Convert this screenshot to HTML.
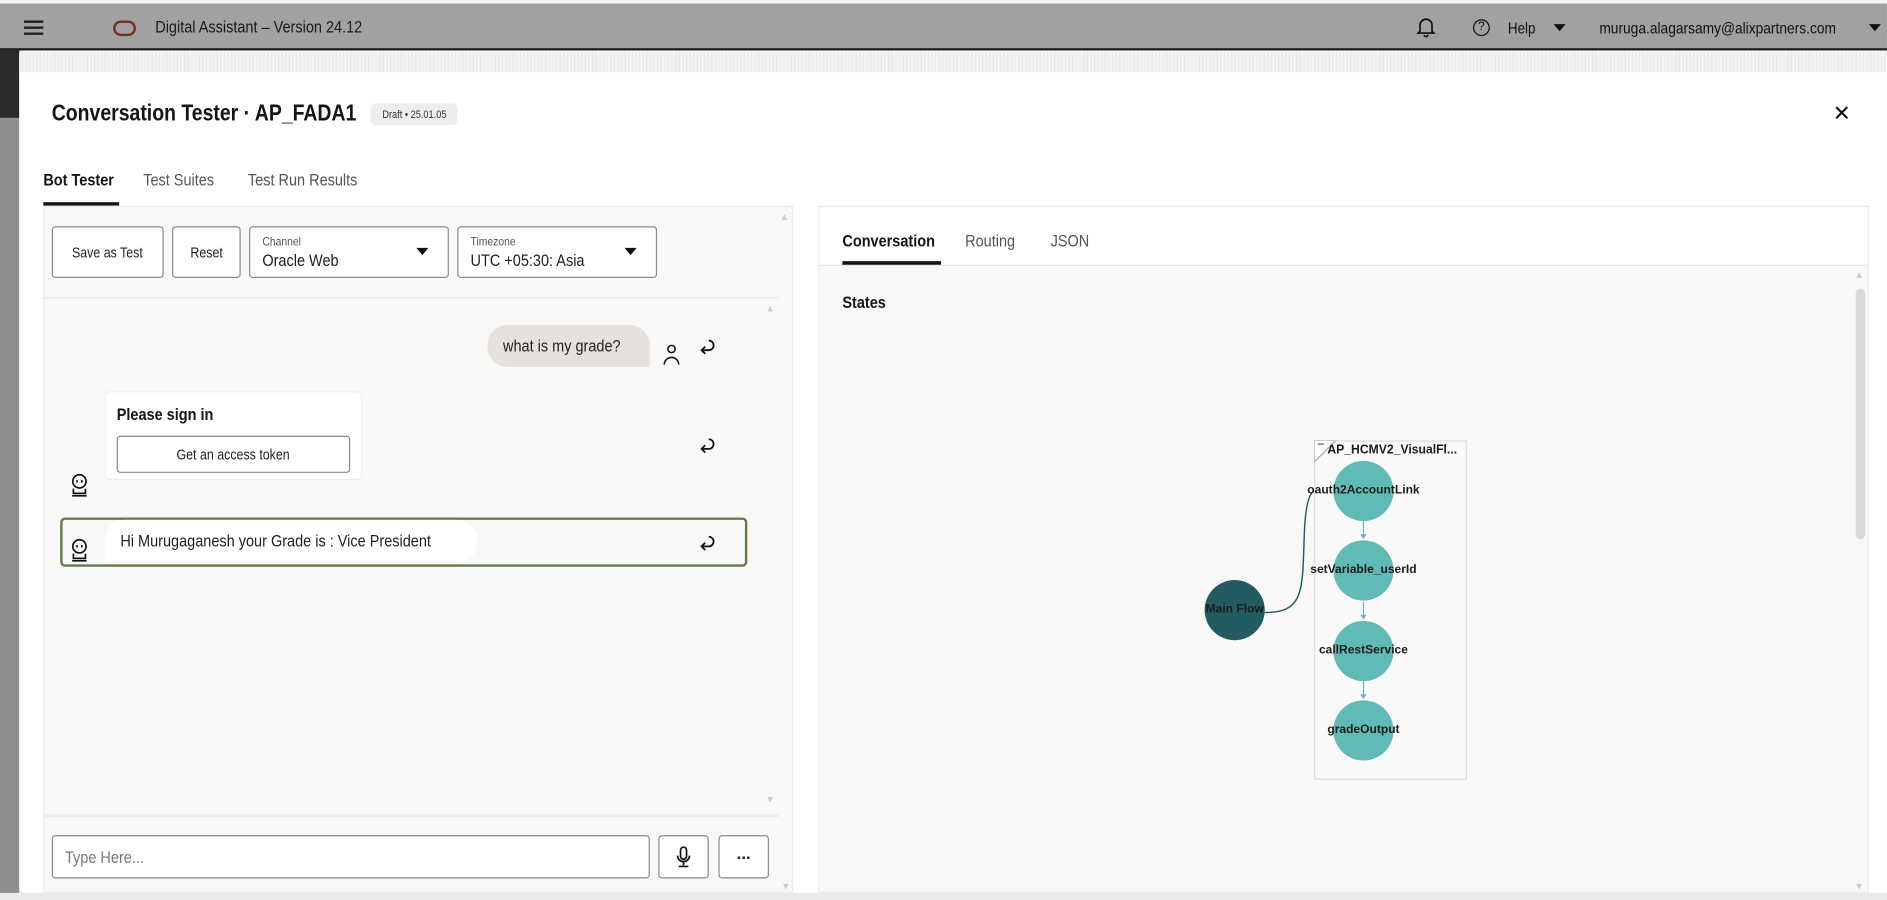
<!DOCTYPE html>
<html><head><meta charset="utf-8"><style>
html,body{margin:0;padding:0;width:1887px;height:900px;overflow:hidden;background:#f2f2f2;font-family:"Liberation Sans",sans-serif;}
#w{position:absolute;left:0;top:0;width:1568px;height:748px;transform:scale(1.2034);transform-origin:0 0;background:#efefef;}
.a{position:absolute;white-space:nowrap;}
.c{display:inline-block;transform-origin:0 50%;transform:scaleX(0.86);white-space:nowrap;}
.btn{position:absolute;background:#fff;border:1px solid #8a8a8a;border-radius:3px;box-sizing:border-box;font-size:12px;color:#222;display:flex;align-items:center;justify-content:center;white-space:nowrap;}
.sel{position:absolute;background:#fff;border:1px solid #8a8a8a;border-radius:3px;box-sizing:border-box;padding:7px 10px;}
.sel .l{font-size:10px;color:#555;}
.sel .v{font-size:14px;color:#222;margin-top:1px;}
.car{position:absolute;width:0;height:0;border-left:5px solid transparent;border-right:5px solid transparent;border-top:6px solid #111;}
.node{position:absolute;width:50px;height:50px;border-radius:50%;background:#60bab6;}
.nl{position:absolute;font-size:10px;font-weight:bold;color:#1c1c1c;white-space:nowrap;transform:translateX(-50%);}
</style></head><body><div id="w">
<!-- header -->
<div class="a" style="left:0;top:0;width:1568px;height:3px;background:#f4f4f4"></div>
<div class="a" style="left:0;top:3px;width:1568px;height:37px;background:#a1a1a1"></div>
<div class="a" style="left:0;top:40px;width:1568px;height:2px;background:#1e1e1e"></div>
<div class="a" style="left:20px;top:17px;width:16px;height:2px;background:#222;box-shadow:0 5px 0 #222,0 10px 0 #222"></div>
<div class="a" style="left:94px;top:17px;width:15px;height:9px;border:2px solid #7a2a22;border-radius:7px"></div>
<div class="a" style="left:129px;top:14px;font-size:14px;color:#1a1a1a"><span class="c">Digital Assistant – Version 24.12</span></div>
<svg class="a" style="left:1177px;top:13px" width="16" height="18" viewBox="0 0 16 18"><path d="M3 13V8a5 5 0 0 1 10 0v5l1.5 1.5h-13z" fill="none" stroke="#111" stroke-width="1.4"/><path d="M6.5 16a1.5 1.5 0 0 0 3 0" fill="none" stroke="#111" stroke-width="1.4"/></svg>
<div class="a" style="left:1224px;top:16px;width:12px;height:12px;border:1.4px solid #111;border-radius:50%;font-size:10px;text-align:center;line-height:12px;color:#111">?</div>
<div class="a" style="left:1253px;top:16px;font-size:13px;color:#111"><span class="c">Help</span></div>
<div class="car" style="left:1291px;top:20px"></div>
<div class="a" style="left:1329px;top:16px;font-size:13px;color:#111"><span class="c" style="transform:scaleX(0.88)">muruga.alagarsamy@alixpartners.com</span></div>
<div class="car" style="left:1553px;top:20px"></div>
<!-- left strip -->
<div class="a" style="left:0;top:42px;width:16px;height:56px;background:#2a2a2a"></div>
<div class="a" style="left:0;top:98px;width:16px;height:650px;background:#8e8e8e"></div>
<!-- modal -->
<div class="a" style="left:16px;top:42px;width:1552px;height:700px;background:#fff;border-radius:4px 0 0 4px"></div>
<div class="a" style="left:16px;top:43px;width:1552px;height:17px;background:repeating-linear-gradient(90deg,#f3f3f3 0 2px,#e9e9e9 2px 3px)"></div>
<div class="a" style="left:43px;top:84px;font-size:19px;font-weight:bold;color:#161513"><span class="c" style="transform:scaleX(0.85)">Conversation Tester · AP_FADA1</span></div>
<div class="a" style="left:308px;top:86px;width:72px;height:18px;background:#eeedeb;border-radius:4px;font-size:9px;color:#333;text-align:center;line-height:18px"><span class="c" style="transform:scaleX(0.85);transform-origin:50% 50%">Draft • 25.01.05</span></div>
<div class="a" style="left:1523px;top:84px;font-size:18px;color:#111">✕</div>
<div class="a" style="left:36px;top:141px;font-size:14px;font-weight:bold;color:#161513"><span class="c">Bot Tester</span></div>
<div class="a" style="left:119px;top:141px;font-size:14px;color:#555"><span class="c">Test Suites</span></div>
<div class="a" style="left:206px;top:141px;font-size:14px;color:#555"><span class="c">Test Run Results</span></div>
<div class="a" style="left:36px;top:168px;width:63px;height:3px;background:#161513"></div>
<!-- left panel -->
<div class="a" style="left:36px;top:171px;width:623px;height:571px;background:#f9f8f6;border:1px solid #ebebeb;box-sizing:border-box"></div>
<div class="a" style="left:648px;top:176px;font-size:8px;color:#ccc">▲</div>
<div class="btn" style="left:43px;top:188px;width:93px;height:43px"><span class="c" style="transform-origin:50% 50%">Save as Test</span></div>
<div class="btn" style="left:143px;top:188px;width:57px;height:43px"><span class="c" style="transform-origin:50% 50%">Reset</span></div>
<div class="sel" style="left:207px;top:188px;width:166px;height:43px"><div class="l"><span class="c">Channel</span></div><div class="v"><span class="c">Oracle Web</span></div></div>
<div class="car" style="left:346px;top:206px"></div>
<div class="sel" style="left:380px;top:188px;width:166px;height:43px"><div class="l"><span class="c">Timezone</span></div><div class="v"><span class="c">UTC +05:30: Asia</span></div></div>
<div class="car" style="left:519px;top:206px"></div>
<div class="a" style="left:36px;top:247px;width:611px;height:1px;background:#e6e6e6"></div>
<div class="a" style="left:636px;top:252px;font-size:8px;color:#ccc">▲</div>
<div class="a" style="left:636px;top:660px;font-size:8px;color:#ccc">▼</div>
<!-- user msg -->
<div class="a" style="left:405px;top:270px;width:135px;height:35px;background:#e5e2dd;border-radius:17px 17px 0 17px;font-size:14px;color:#222;line-height:35px;padding-left:13px;box-sizing:border-box"><span class="c">what is my grade?</span></div>
<svg class="a" style="left:550px;top:285px" width="16" height="18" viewBox="0 0 16 18"><circle cx="8" cy="5" r="3" fill="none" stroke="#111" stroke-width="1.3"/><path d="M2 18a6 6 0 0 1 12 0" fill="none" stroke="#111" stroke-width="1.3"/></svg>
<svg class="a" style="left:580px;top:280px" width="16" height="16" viewBox="0 0 16 16"><path d="M9 3a4 4 0 0 1 0 8H3M6 8l-3 3 3 3" fill="none" stroke="#111" stroke-width="1.5"/></svg>
<!-- card -->
<div class="a" style="left:87px;top:325px;width:214px;height:74px;background:#fff;border:1px solid #eee;border-radius:4px;box-sizing:border-box"></div>
<div class="a" style="left:97px;top:336px;font-size:14px;font-weight:bold;color:#161513"><span class="c">Please sign in</span></div>
<div class="btn" style="left:97px;top:362px;width:194px;height:31px;font-size:12px"><span class="c" style="transform-origin:50% 50%">Get an access token</span></div>
<svg class="a" style="left:580px;top:362px" width="16" height="16" viewBox="0 0 16 16"><path d="M9 3a4 4 0 0 1 0 8H3M6 8l-3 3 3 3" fill="none" stroke="#111" stroke-width="1.5"/></svg>
<svg class="a" style="left:58px;top:393px" width="16" height="20" viewBox="0 0 16 20"><circle cx="8" cy="7" r="5.5" fill="none" stroke="#111" stroke-width="1.4"/><path d="M6 6v2M10 6v2" stroke="#111" stroke-width="1.4"/><path d="M3 13v4h10v-4M2 19h12" fill="none" stroke="#111" stroke-width="1.4"/></svg>
<!-- highlighted -->
<div class="a" style="left:50px;top:430px;width:571px;height:41px;border:2px solid #5f7d4b;border-radius:4px;box-sizing:border-box"></div>
<div class="a" style="left:87px;top:432px;width:310px;height:35px;background:#fff;border-radius:17px 17px 17px 0;font-size:14px;color:#222;line-height:35px;padding-left:13px;box-sizing:border-box"><span class="c">Hi Murugaganesh your Grade is : Vice President</span></div>
<svg class="a" style="left:58px;top:447px" width="16" height="20" viewBox="0 0 16 20"><circle cx="8" cy="7" r="5.5" fill="none" stroke="#111" stroke-width="1.4"/><path d="M6 6v2M10 6v2" stroke="#111" stroke-width="1.4"/><path d="M3 13v4h10v-4M2 19h12" fill="none" stroke="#111" stroke-width="1.4"/></svg>
<svg class="a" style="left:580px;top:443px" width="16" height="16" viewBox="0 0 16 16"><path d="M9 3a4 4 0 0 1 0 8H3M6 8l-3 3 3 3" fill="none" stroke="#111" stroke-width="1.5"/></svg>
<div class="a" style="left:36px;top:677px;width:611px;height:2px;background:#ececec"></div>
<div class="a" style="left:43px;top:694px;width:497px;height:36px;background:#fff;border:1px solid #8a8a8a;border-radius:3px;box-sizing:border-box;font-size:14px;color:#777;line-height:34px;padding-left:10px"><span class="c">Type Here...</span></div>
<div class="btn" style="left:547px;top:694px;width:42px;height:36px"><svg width="12" height="18" viewBox="0 0 12 18"><rect x="3.5" y="1" width="5" height="10" rx="2.5" fill="none" stroke="#111" stroke-width="1.4"/><path d="M1 8a5 5 0 0 0 10 0M6 13v3M2 17h8" fill="none" stroke="#111" stroke-width="1.4"/></svg></div>
<div class="btn" style="left:597px;top:694px;width:42px;height:36px;font-weight:bold;font-size:14px;padding-bottom:6px">...</div>
<div class="a" style="left:649px;top:732px;font-size:8px;color:#ccc">▼</div>
<!-- right panel -->
<div class="a" style="left:680px;top:171px;width:873px;height:571px;background:#f9f8f6;border:1px solid #ebebeb;box-sizing:border-box"></div>
<div class="a" style="left:681px;top:172px;width:871px;height:48px;background:#fff;border-bottom:1px solid #e4e4e4"></div>
<div class="a" style="left:700px;top:192px;font-size:14px;font-weight:bold;color:#161513"><span class="c">Conversation</span></div>
<div class="a" style="left:802px;top:192px;font-size:14px;color:#555"><span class="c">Routing</span></div>
<div class="a" style="left:873px;top:192px;font-size:14px;color:#555"><span class="c">JSON</span></div>
<div class="a" style="left:700px;top:217px;width:82px;height:3px;background:#161513"></div>
<div class="a" style="left:700px;top:243px;font-size:14px;font-weight:bold;color:#161513"><span class="c">States</span></div>
<div class="a" style="left:1541px;top:224px;font-size:8px;color:#ccc">▲</div>
<div class="a" style="left:1542px;top:240px;width:8px;height:208px;background:#d9d9d9;border-radius:4px"></div>
<div class="a" style="left:1541px;top:732px;font-size:8px;color:#ccc">▼</div>
<!-- graph -->
<div class="a" style="left:1092px;top:366px;width:127px;height:282px;border:1px solid #dcdde0;background:#f9f9f9;box-sizing:border-box"></div>
<svg class="a" style="left:1092px;top:366px" width="20" height="20"><path d="M0 0h18L0 18z" fill="#fff" stroke="#aaa" stroke-width="1"/><path d="M3 3h5" stroke="#555"/></svg>
<div class="a" style="left:1103px;top:368px;font-size:11px;font-weight:bold;color:#1c1c1c"><span class="c" style="transform:scaleX(0.92)">AP_HCMV2_VisualFl...</span></div>
<svg class="a" style="left:1000px;top:380px" width="200" height="260"><path d="M51 129C85 129 82 110 84 60C85 40 88 30 92 28" fill="none" stroke="#225c62" stroke-width="1.2"/><path d="M133 53v13M133 120v13M133 186v13" stroke="#60bab6" stroke-width="1"/><path d="M131 64l2 3 2-3M131 131l2 3 2-3M131 197l2 3 2-3" fill="#60bab6" stroke="#60bab6"/></svg>
<div class="node" style="left:1108px;top:383px"></div>
<div class="node" style="left:1108px;top:449px"></div>
<div class="node" style="left:1108px;top:516px"></div>
<div class="node" style="left:1108px;top:582px"></div>
<div class="node" style="left:1001px;top:482px;background:#225c62"></div>
<div class="nl" style="left:1133px;top:402px">oauth2AccountLink</div>
<div class="nl" style="left:1133px;top:468px">setVariable_userId</div>
<div class="nl" style="left:1133px;top:535px">callRestService</div>
<div class="nl" style="left:1133px;top:601px">gradeOutput</div>
<div class="nl" style="left:1026px;top:501px">Main Flow</div>
<div class="a" style="left:0;top:742px;width:1568px;height:6px;background:#e9e9e9"></div>
</div></body></html>
